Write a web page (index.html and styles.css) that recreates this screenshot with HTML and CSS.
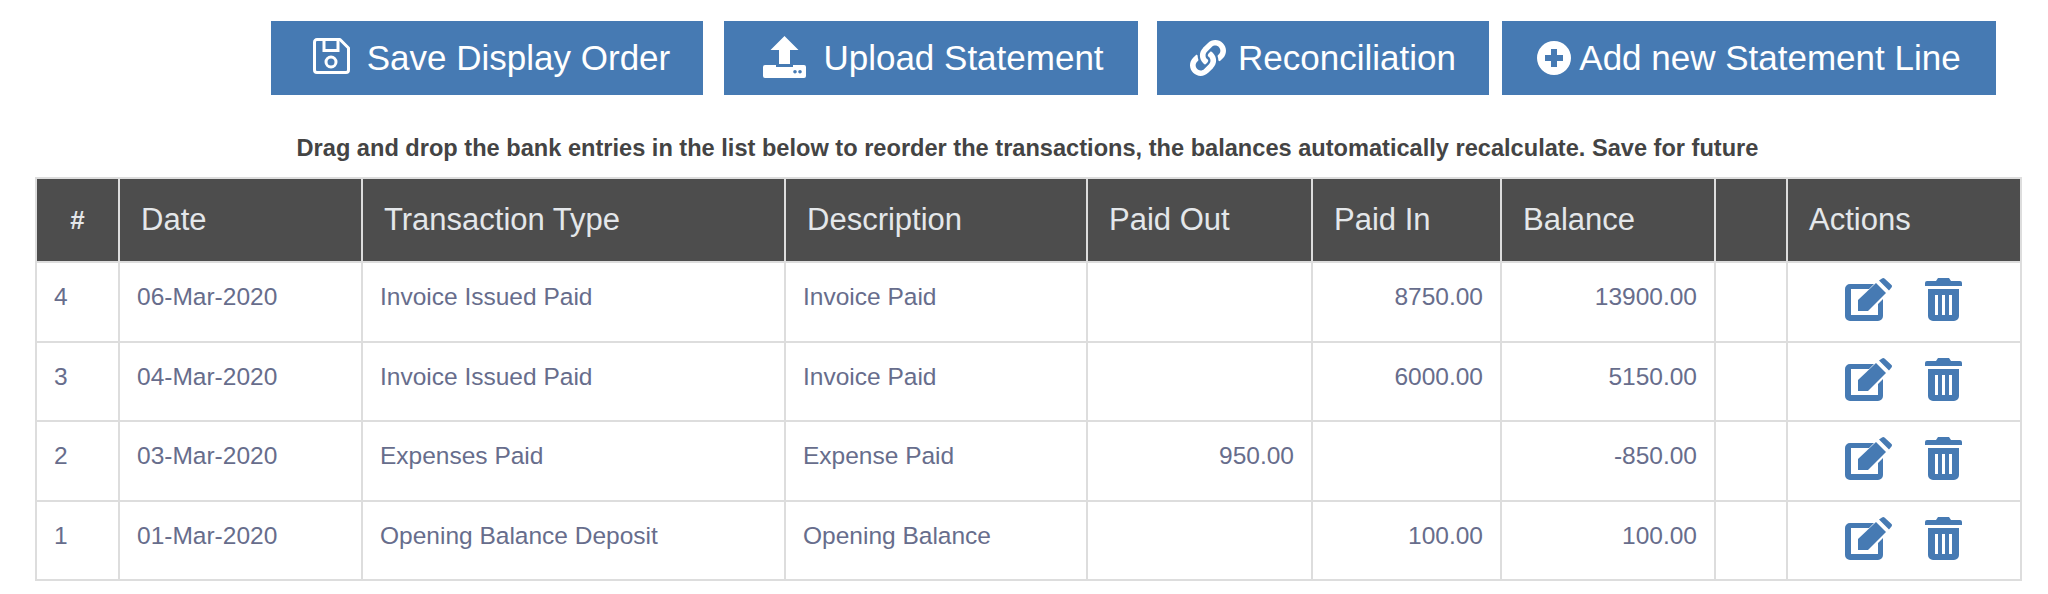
FILE: index.html
```html
<!DOCTYPE html>
<html lang="en">
<head>
    <meta charset="UTF-8">
    <title>Bank Statement</title>
    <link rel="stylesheet" href="styles.css">
</head>
<body>
    <div id="page">
        <div id="toolbar">
            <a class="btn btn-save">
                <svg class="ico-save" viewBox="0 0 37 36"><path d="M4 1.500H27L35.500 10V32A2.500 2.500 0 0 1 33 34.500H4A2.500 2.500 0 0 1 1.500 32V4A2.500 2.500 0 0 1 4 1.500Z" fill="none" stroke="#fff" stroke-width="3" stroke-linejoin="round"/><path d="M11 2V12.500H25V2" fill="none" stroke="#fff" stroke-width="3"/><circle cx="18" cy="24" r="5" fill="none" stroke="#fff" stroke-width="3"/></svg>
                Save Display Order
            </a>
            <a class="btn btn-upload">
                <svg class="ico-upload" viewBox="0 0 43 42"><path d="M21.500 0L35.500 14H27V28H16V14H7.500Z" fill="#fff"/><path fill-rule="evenodd" fill="#fff" d="M2 29H13V31H30V29H41A2 2 0 0 1 43 31V40A2 2 0 0 1 41 42H2A2 2 0 0 1 0 40V31A2 2 0 0 1 2 29ZM32 34A1.800 1.800 0 1 0 32 37.600A1.800 1.800 0 1 0 32 34ZM37 34A1.800 1.800 0 1 0 37 37.600A1.800 1.800 0 1 0 37 34Z"/></svg>
                Upload Statement
            </a>
            <a class="btn btn-recon">
                <svg class="ico-link" viewBox="0 0 512 512"><path fill="#fff" d="M326.612 185.391c59.747 59.809 58.927 155.698.36 214.59-.11.12-.24.25-.36.37l-67.2 67.2c-59.27 59.27-155.699 59.262-214.96 0-59.27-59.26-59.27-155.7 0-214.96l37.106-37.106c9.84-9.84 26.786-3.3 27.294 10.606.648 17.722 3.826 35.527 9.69 52.721 1.986 5.822.567 12.262-3.783 16.612l-13.087 13.087c-28.026 28.026-28.905 73.66-1.155 101.96 28.024 28.579 74.086 28.749 102.325.51l67.2-67.19c28.191-28.191 28.073-73.757 0-101.83-3.701-3.694-7.429-6.564-10.341-8.569a16.037 16.037 0 0 1-6.947-12.606c-.396-10.567 3.348-21.456 11.698-29.806l21.054-21.055c5.521-5.521 14.182-6.199 20.584-1.731a152.482 152.482 0 0 1 20.522 17.197zM467.547 44.449c-59.261-59.262-155.69-59.27-214.96 0l-67.2 67.2c-.12.12-.25.25-.36.37-58.566 58.892-59.387 154.781.36 214.59a152.454 152.454 0 0 0 20.521 17.196c6.402 4.468 15.064 3.789 20.584-1.731l21.054-21.055c8.35-8.35 12.094-19.239 11.698-29.806a16.037 16.037 0 0 0-6.947-12.606c-2.912-2.005-6.64-4.875-10.341-8.569-28.073-28.073-28.191-73.639 0-101.83l67.2-67.19c28.239-28.239 74.3-28.069 102.325.51 27.75 28.3 26.872 73.934-1.155 101.96l-13.087 13.087c-4.35 4.35-5.769 10.79-3.783 16.612 5.864 17.194 9.042 34.999 9.69 52.721.509 13.906 17.454 20.446 27.294 10.606l37.106-37.106c59.271-59.259 59.271-155.699.001-214.959z"/></svg>
                Reconciliation
            </a>
            <a class="btn btn-add">
                <svg class="ico-plus" viewBox="0 0 34 34"><path fill="#fff" fill-rule="evenodd" d="M17 0A17 17 0 1 1 17 34A17 17 0 1 1 17 0ZM14 8V14H8V20H14V26H20V20H26V14H20V8Z"/></svg>
                Add new Statement Line
            </a>
        </div>
        <p id="hint">Drag and drop the bank entries in the list below to reorder the transactions, the balances automatically recalculate. Save for future</p>
        <table id="statement">
            <colgroup>
                <col class="c-num"><col class="c-date"><col class="c-type"><col class="c-desc"><col class="c-out"><col class="c-in"><col class="c-bal"><col class="c-blank"><col class="c-act">
            </colgroup>
            <thead>
                <tr>
                    <th class="center">#</th><th>Date</th><th>Transaction Type</th><th>Description</th><th>Paid Out</th><th>Paid In</th><th>Balance</th><th></th><th>Actions</th>
                </tr>
            </thead>
            <tbody>
                <tr>
                    <td>4</td><td>06-Mar-2020</td><td>Invoice Issued Paid</td><td>Invoice Paid</td><td class="num"></td><td class="num">8750.00</td><td class="num">13900.00</td><td></td>
                    <td><div class="actions"><svg class="ico-edit" viewBox="0 0 47 43"><use href="#edit"/></svg><svg class="ico-trash" viewBox="0 0 37 43"><use href="#trash"/></svg></div></td>
                </tr>
                <tr>
                    <td>3</td><td>04-Mar-2020</td><td>Invoice Issued Paid</td><td>Invoice Paid</td><td class="num"></td><td class="num">6000.00</td><td class="num">5150.00</td><td></td>
                    <td><div class="actions"><svg class="ico-edit" viewBox="0 0 47 43"><use href="#edit"/></svg><svg class="ico-trash" viewBox="0 0 37 43"><use href="#trash"/></svg></div></td>
                </tr>
                <tr>
                    <td>2</td><td>03-Mar-2020</td><td>Expenses Paid</td><td>Expense Paid</td><td class="num">950.00</td><td class="num"></td><td class="num">-850.00</td><td></td>
                    <td><div class="actions"><svg class="ico-edit" viewBox="0 0 47 43"><use href="#edit"/></svg><svg class="ico-trash" viewBox="0 0 37 43"><use href="#trash"/></svg></div></td>
                </tr>
                <tr>
                    <td>1</td><td>01-Mar-2020</td><td>Opening Balance Deposit</td><td>Opening Balance</td><td class="num"></td><td class="num">100.00</td><td class="num">100.00</td><td></td>
                    <td><div class="actions"><svg class="ico-edit" viewBox="0 0 47 43"><use href="#edit"/></svg><svg class="ico-trash" viewBox="0 0 37 43"><use href="#trash"/></svg></div></td>
                </tr>
            </tbody>
        </table>
    </div>
    <svg class="defs" width="0" height="0">
        <defs>
            <g id="edit">
                <path fill="#467ab3" d="M5 6H29L24 11H6V37H33V26L38 21V38A5 5 0 0 1 33 43H5A5 5 0 0 1 0 38V11A5 5 0 0 1 5 6Z"/>
                <path fill="#467ab3" d="M13 22L31 5L41 15L23 33H13Z"/>
                <path fill="#467ab3" d="M34 2.500L37 0.500A2 2 0 0 1 39.500 0.500L46.500 7A2 2 0 0 1 46.500 9.500L44 12.500Z"/>
            </g>
            <g id="trash">
                <path fill="#467ab3" d="M13 0H24L26 3H35A2 2 0 0 1 37 5V8H0V5A2 2 0 0 1 2 3H11Z"/>
                <path fill="#467ab3" fill-rule="evenodd" d="M3 11H34V38A5 5 0 0 1 29 43H8A5 5 0 0 1 3 38ZM10 17V37H13V17ZM17 17V37H20V17ZM24 17V37H27V17Z"/>
            </g>
        </defs>
    </svg>
</body>
</html>
```

FILE: styles.css
```css
*{
    margin: 0;
    padding: 0;
    box-sizing: border-box;
    font-family: "Liberation Sans", Arial, sans-serif;
}
html,body{
    width: 100%;
    height: 100%;
    background-color: #fff;
}
#page{
    padding: 21px 28px 0 35px;
}
#toolbar{
    display: flex;
    justify-content: flex-end;
    padding-right: 24px;
}
.btn{
    display: flex;
    align-items: center;
    justify-content: center;
    height: 74px;
    font-size: 35px;
    color: #fff;
    background-color: #467ab3;
}
.btn svg{
    flex: none;
}
.btn-save{
    width: 432px;
    padding-left: 9px;
    gap: 17px;
}
.btn-upload{
    width: 414px;
    margin-left: 21px;
    padding-left: 5px;
    gap: 17px;
}
.btn-recon{
    width: 332px;
    margin-left: 19px;
    gap: 12px;
}
.btn-add{
    width: 494px;
    margin-left: 13px;
    gap: 8px;
}
.ico-save{
    width: 37px;
    height: 36px;
    margin-bottom: 4px;
}
.ico-upload{
    width: 43px;
    height: 42px;
    margin-bottom: 3px;
}
.ico-link{
    width: 36px;
    height: 36px;
}
.ico-plus{
    width: 34px;
    height: 34px;
}
#hint{
    height: 82px;
    display: flex;
    align-items: center;
    justify-content: center;
    padding-top: 24px;
    font-size: 23.600px;
    font-weight: 700;
    color: #444;
}
#statement{
    width: 1985px;
    table-layout: fixed;
    border-collapse: collapse;
}
.c-num{ width: 83px; }
.c-date{ width: 243px; }
.c-type{ width: 423px; }
.c-desc{ width: 302px; }
.c-out{ width: 225px; }
.c-in{ width: 189px; }
.c-bal{ width: 214px; }
.c-blank{ width: 72px; }
.c-act{ width: 234px; }
th,td{
    border: 2px solid #ddd;
    text-align: left;
}
th{
    height: 84px;
    padding-left: 21px;
    font-size: 31px;
    font-weight: 400;
    color: #e4e7ea;
    background-color: #4d4d4d;
}
th.center{
    padding-left: 0;
    text-align: center;
    font-size: 26px;
    font-weight: 700;
}
td{
    height: 79.500px;
    padding: 0 17px 9px;
    font-size: 24.500px;
    color: #676d8c;
}
td.num{
    text-align: right;
}
td:last-child{
    padding-bottom: 4px;
}
.actions{
    display: flex;
    justify-content: flex-start;
    align-items: center;
    gap: 33px;
    padding-left: 40px;
}
.ico-edit{
    width: 47px;
    height: 43px;
}
.ico-trash{
    width: 37px;
    height: 43px;
}
.defs{
    position: absolute;
}
```
